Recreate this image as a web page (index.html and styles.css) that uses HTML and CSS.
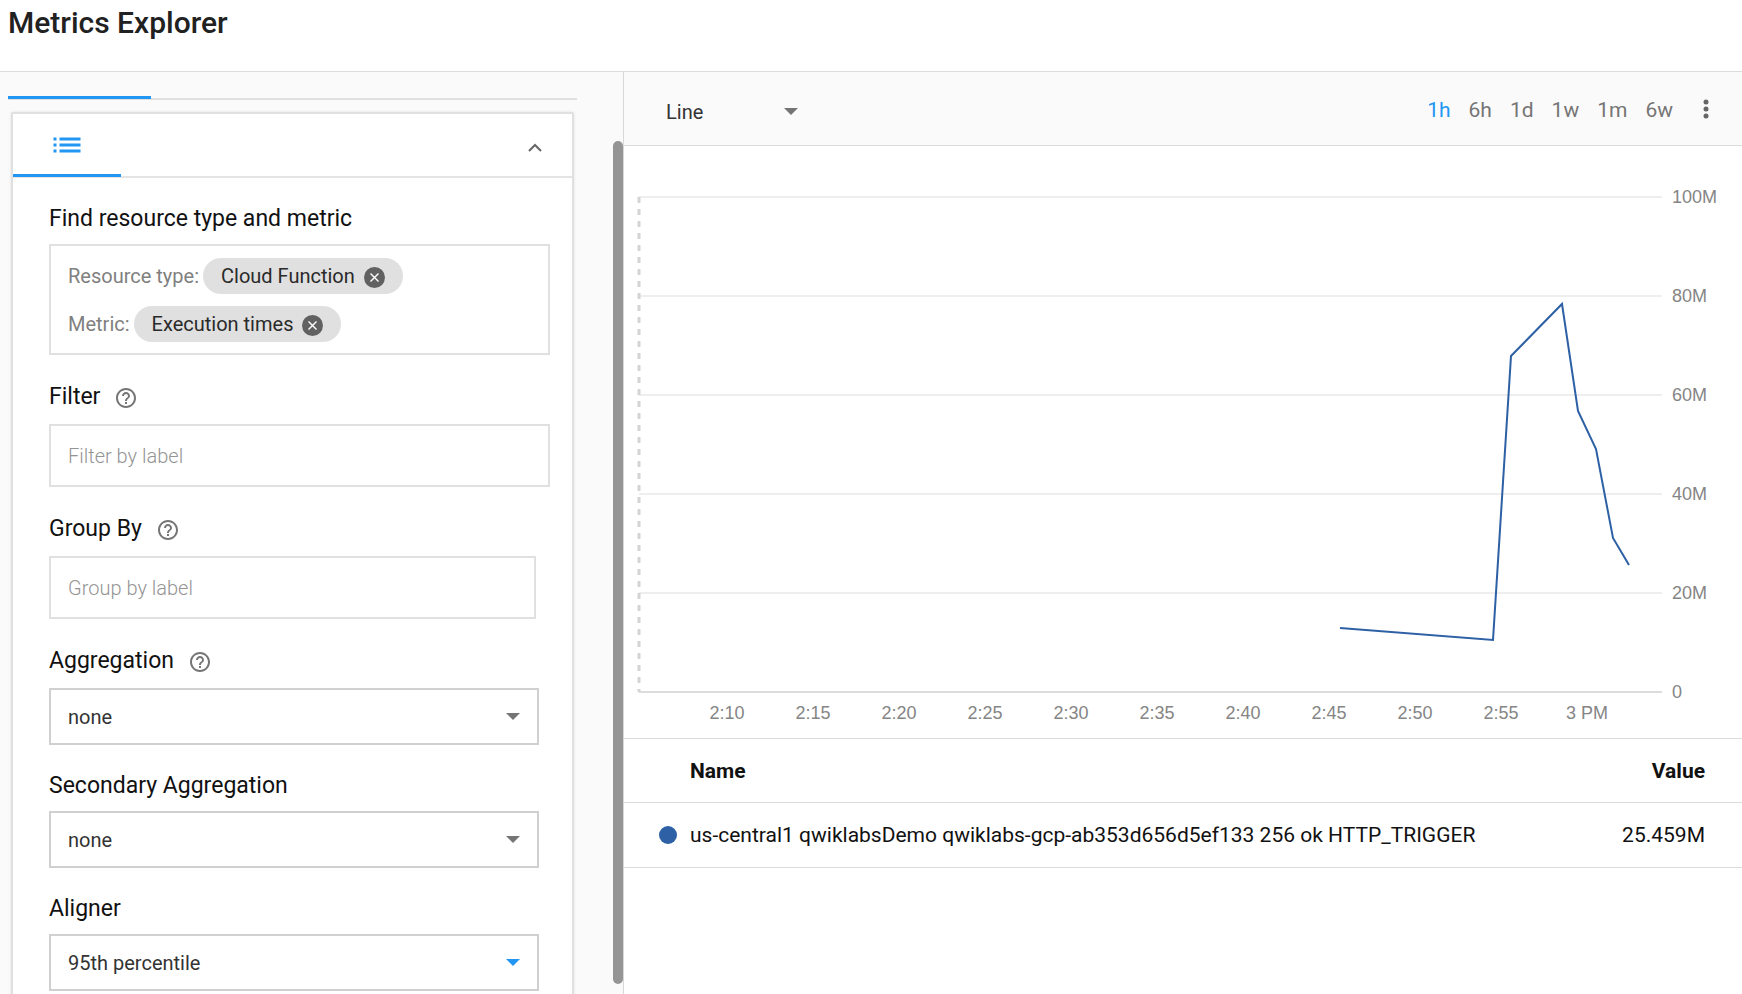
FILE: index.html
```html
<!DOCTYPE html>
<html lang="en">
<head>
    <meta charset="UTF-8">
    <meta name="viewport" content="width=device-width, initial-scale=1.0">
    <title>Metrics Explorer</title>
    <link rel="stylesheet" href="styles.css">
</head>
<body>
    <header class="page-header">
        <h1>Metrics Explorer</h1>
    </header>

    <main class="workspace">
        <section class="config-pane">
            <div class="tab-strip"><div class="tab-ink"></div></div>

            <form class="card">
                <div class="card-header">
                    <button type="button" class="card-tab" aria-label="Metric">
                        <svg width="28" height="16" viewBox="0 0 28 16" fill="#2196f3">
                            <path d="M.5.5h3v3h-3zM6.500.5h21v3h-21zM.5 6.500h3v3h-3zM6.500 6.500h21v3h-21zM.5 12.500h3v3h-3zM6.500 12.500h21v3h-21z"/>
                        </svg>
                    </button>
                    <button type="button" class="collapse" aria-label="Collapse">
                        <svg width="14" height="9" viewBox="0 0 14 9" fill="none" stroke="#666" stroke-width="2">
                            <path d="M1 8l6-6 6 6"/>
                        </svg>
                    </button>
                </div>

                <div class="card-body">
                    <h2 class="field-label">Find resource type and metric</h2>
                    <div class="metric-box">
                        <div class="chip-row">
                            <span>Resource type:</span>
                            <span class="chip">Cloud Function
                                <button type="button" class="chip-remove" aria-label="Remove Cloud Function">
                                    <svg width="21" height="21" viewBox="0 0 21 21">
                                        <circle cx="10.5" cy="10.5" r="10.5" fill="#616161"/>
                                        <path d="M6.5 6.5l8 8M14.5 6.5l-8 8" stroke="#fff" stroke-width="1.4"/>
                                    </svg>
                                </button>
                            </span>
                        </div>
                        <div class="chip-row">
                            <span>Metric:</span>
                            <span class="chip">Execution times
                                <button type="button" class="chip-remove" aria-label="Remove Execution times">
                                    <svg width="21" height="21" viewBox="0 0 21 21">
                                        <circle cx="10.5" cy="10.5" r="10.5" fill="#616161"/>
                                        <path d="M6.5 6.5l8 8M14.5 6.5l-8 8" stroke="#fff" stroke-width="1.4"/>
                                    </svg>
                                </button>
                            </span>
                        </div>
                    </div>

                    <div class="field-label with-help">
                        <label for="filter">Filter</label>
                        <button type="button" class="help" aria-label="Filter help">
                            <svg width="24" height="24" viewBox="0 0 24 24" fill="#757575">
                                <path d="M11 18h2v-2h-2v2zm1-16C6.48 2 2 6.48 2 12s4.48 10 10 10 10-4.48 10-10S17.52 2 12 2zm0 18c-4.41 0-8-3.59-8-8s3.59-8 8-8 8 3.59 8 8-3.59 8-8 8zm0-14c-2.21 0-4 1.79-4 4h2c0-1.1.9-2 2-2s2 .9 2 2c0 2-3 1.75-3 5h2c0-2.25 3-2.5 3-5 0-2.21-1.79-4-4-4z"/>
                            </svg>
                        </button>
                    </div>
                    <input class="text-field" type="text" id="filter" placeholder="Filter by label">

                    <div class="field-label with-help">
                        <label for="groupBy">Group By</label>
                        <button type="button" class="help" aria-label="Group By help">
                            <svg width="24" height="24" viewBox="0 0 24 24" fill="#757575">
                                <path d="M11 18h2v-2h-2v2zm1-16C6.48 2 2 6.48 2 12s4.48 10 10 10 10-4.48 10-10S17.52 2 12 2zm0 18c-4.41 0-8-3.59-8-8s3.59-8 8-8 8 3.59 8 8-3.59 8-8 8zm0-14c-2.21 0-4 1.79-4 4h2c0-1.1.9-2 2-2s2 .9 2 2c0 2-3 1.75-3 5h2c0-2.25 3-2.5 3-5 0-2.21-1.79-4-4-4z"/>
                            </svg>
                        </button>
                    </div>
                    <div class="group-wrap">
                        <input class="text-field" type="text" id="groupBy" placeholder="Group by label">
                    </div>

                    <div class="field-label with-help">
                        <label for="aggregation">Aggregation</label>
                        <button type="button" class="help" aria-label="Aggregation help">
                            <svg width="24" height="24" viewBox="0 0 24 24" fill="#757575">
                                <path d="M11 18h2v-2h-2v2zm1-16C6.48 2 2 6.48 2 12s4.48 10 10 10 10-4.48 10-10S17.52 2 12 2zm0 18c-4.41 0-8-3.59-8-8s3.59-8 8-8 8 3.59 8 8-3.59 8-8 8zm0-14c-2.21 0-4 1.79-4 4h2c0-1.1.9-2 2-2s2 .9 2 2c0 2-3 1.75-3 5h2c0-2.25 3-2.5 3-5 0-2.21-1.79-4-4-4z"/>
                            </svg>
                        </button>
                    </div>
                    <div class="select-wrap">
                        <select id="aggregation">
                            <option>none</option>
                        </select>
                    </div>

                    <label class="field-label" for="secondary">Secondary Aggregation</label>
                    <div class="select-wrap">
                        <select id="secondary">
                            <option>none</option>
                        </select>
                    </div>

                    <label class="field-label" for="aligner">Aligner</label>
                    <div class="select-wrap active">
                        <select id="aligner">
                            <option>95th percentile</option>
                        </select>
                    </div>
                </div>
            </form>
            <div class="scroll-thumb"></div>
        </section>

        <section class="chart-pane">
            <div class="toolbar">
                <div class="chart-type">
                    <select aria-label="Chart type">
                        <option>Line</option>
                    </select>
                </div>
                <div class="ranges">
                    <button type="button" class="selected">1h</button>
                    <button type="button">6h</button>
                    <button type="button">1d</button>
                    <button type="button">1w</button>
                    <button type="button">1m</button>
                    <button type="button">6w</button>
                </div>
                <button type="button" class="more" aria-label="More options">
                    <svg width="6" height="20" viewBox="0 0 6 20" fill="#666">
                        <circle cx="3" cy="3" r="2.5"/>
                        <circle cx="3" cy="10" r="2.5"/>
                        <circle cx="3" cy="17" r="2.5"/>
                    </svg>
                </button>
            </div>

            <svg class="chart" viewBox="0 0 1118 592" role="img" aria-label="Execution times">
                <g class="grid">
                    <path d="M15 51H1038M15 150H1038M15 249H1038M15 348H1038M15 447H1038"/>
                </g>
                <path class="axis" d="M15 546H1038"/>
                <path class="start" d="M15 51v495"/>
                <g class="ticks">
                    <text x="1048" y="57">100M</text>
                    <text x="1048" y="156">80M</text>
                    <text x="1048" y="255">60M</text>
                    <text x="1048" y="354">40M</text>
                    <text x="1048" y="453">20M</text>
                    <text x="1048" y="552">0</text>
                </g>
                <g class="ticks times">
                    <text x="103" y="573">2:10</text>
                    <text x="189" y="573">2:15</text>
                    <text x="275" y="573">2:20</text>
                    <text x="361" y="573">2:25</text>
                    <text x="447" y="573">2:30</text>
                    <text x="533" y="573">2:35</text>
                    <text x="619" y="573">2:40</text>
                    <text x="705" y="573">2:45</text>
                    <text x="791" y="573">2:50</text>
                    <text x="877" y="573">2:55</text>
                    <text x="963" y="573">3 PM</text>
                </g>
                <polyline class="series" points="716,482 869,494 887,210 938,158 954,265 972,303 989,392 1005,419"/>
            </svg>

            <table class="legend">
                <thead>
                    <tr>
                        <th>Name</th>
                        <th>Value</th>
                    </tr>
                </thead>
                <tbody>
                    <tr>
                        <td><span class="dot"></span>us-central1 qwiklabsDemo qwiklabs-gcp-ab353d656d5ef133 256 ok HTTP_TRIGGER</td>
                        <td>25.459M</td>
                    </tr>
                </tbody>
            </table>
        </section>
    </main>
</body>
</html>
```
FILE: styles.css
```css
* {
    box-sizing: border-box;
}
body {
    margin: 0;
    height: 100vh;
    display: flex;
    flex-direction: column;
    overflow: hidden;
    font-family: Roboto, sans-serif;
    font-size: 20px;
    color: #212121;
    background: #fff;
}
button, input, select {
    font: inherit;
    color: inherit;
}
button {
    padding: 0;
    border: none;
    background: none;
    cursor: pointer;
}
svg {
    display: block;
}
.page-header {
    flex: none;
    height: 72px;
    padding: 6px 8px;
    border-bottom: 1px solid #dcdcdc;
}
h1 {
    margin: 0;
    font-size: 30px;
    line-height: 34px;
    font-weight: 500;
}
.workspace {
    flex: 1;
    min-height: 0;
    display: grid;
    grid-template-columns: 623px 1fr;
}

/* left pane */
.config-pane {
    position: relative;
    overflow: hidden;
    padding: 24px 46px 0 8px;
    background: #fafafa;
}
.tab-strip {
    height: 4px;
    border-bottom: 2px solid #e0e0e0;
}
.tab-ink {
    width: 143px;
    height: 3px;
    background: #2196f3;
}
.card {
    margin: 12px 3px 0;
    height: 1000px;
    border: 2px solid #e0e0e0;
    border-radius: 2px;
    background: #fff;
    box-shadow: 0 0 3px rgba(0, 0, 0, 0.1);
}
.card-header {
    display: flex;
    justify-content: space-between;
    height: 64px;
    border-bottom: 2px solid #e4e4e4;
}
.card-tab {
    width: 108px;
    height: 63px;
    display: flex;
    align-items: center;
    justify-content: center;
    padding-top: 2px;
    border-bottom: 3px solid #2196f3;
}
.collapse {
    padding: 4px 30px 0;
}
.card-body {
    padding: 0 22px 0 36px;
}
.field-label {
    display: block;
    margin: 0;
    padding: 27px 0 12px;
    font-size: 23px;
    line-height: 27px;
    font-weight: 400;
    color: #111;
}
.with-help {
    display: flex;
    align-items: center;
    gap: 14px;
    padding: 28px 0 14px;
}
.help {
    height: 24px;
    margin-top: 3px;
}
.metric-box {
    display: flex;
    flex-direction: column;
    gap: 12px;
    padding: 12px 17px;
    height: 111px;
    border: 2px solid #e0e0e0;
    color: #808080;
}
.chip-row {
    display: flex;
    align-items: center;
    gap: 4px;
}
.chip {
    display: flex;
    align-items: center;
    gap: 9px;
    height: 36px;
    padding: 0 18px;
    border-radius: 18px;
    background: #e0e0e0;
    color: #2a2a2a;
}
.chip-remove {
    margin-top: 2px;
}
.text-field {
    display: block;
    width: 100%;
    height: 63px;
    padding: 0 17px;
    border: 2px solid #e0e0e0;
    border-radius: 0;
    background: #fff;
}
.text-field::placeholder {
    color: #949494;
    font-weight: 300;
    opacity: 1;
}
.group-wrap {
    margin-right: 14px;
}
.select-wrap {
    position: relative;
    margin-right: 11px;
}
.select-wrap select {
    display: block;
    width: 100%;
    height: 57px;
    padding: 0 17px;
    border: 2px solid #d0d0d0;
    border-radius: 0;
    background: #fff;
    color: #333;
    appearance: none;
}
.select-wrap::after, .chart-type::after {
    content: "";
    position: absolute;
    top: 25px;
    right: 19px;
    border: 7px solid transparent;
    border-top-color: #757575;
    border-bottom: none;
    pointer-events: none;
}
.select-wrap.active::after {
    border-top-color: #2196f3;
}
.scroll-thumb {
    position: absolute;
    top: 69px;
    right: 0;
    bottom: 10px;
    width: 10px;
    border-radius: 5px;
    background: #959595;
}

/* right pane */
.chart-pane {
    min-width: 0;
    border-left: 1px solid #d8d8d8;
}
.toolbar {
    display: flex;
    align-items: center;
    height: 74px;
    padding: 0 33px 0 42px;
    border-bottom: 1px solid #dcdcdc;
    background: #fafafa;
}
.chart-type {
    position: relative;
    margin-top: 6px;
    margin-right: auto;
}
.chart-type select {
    width: 132px;
    height: 36px;
    padding: 0;
    border: none;
    background: none;
    color: #333;
    appearance: none;
}
.chart-type::after {
    top: 14px;
    right: 0;
}
.ranges {
    display: flex;
    gap: 18px;
    padding-top: 2px;
    font-size: 21px;
    color: #757575;
}
.ranges .selected {
    color: #2196f3;
}
.more {
    margin-left: 30px;
}
.chart {
    width: 100%;
    height: auto;
    fill: none;
}
.grid {
    stroke: #eee;
    stroke-width: 2;
}
.axis {
    stroke: #dcdcdc;
    stroke-width: 2;
}
.start {
    stroke: #d4d4d4;
    stroke-width: 3;
    stroke-dasharray: 6 6;
}
.ticks {
    fill: #858585;
    font-family: "Liberation Sans", Arial, sans-serif;
    font-size: 18px;
}
.times {
    text-anchor: middle;
}
.series {
    stroke: #2d60a5;
    stroke-width: 2;
}
.legend {
    width: 100%;
    border-collapse: collapse;
    border-top: 1px solid #dcdcdc;
    font-size: 21px;
    color: #111;
}
.legend th, .legend td {
    height: 65px;
    padding: 0 37px 0 66px;
    border-bottom: 1px solid #dcdcdc;
    text-align: left;
}
.legend th {
    height: 64px;
    font-weight: 700;
}
.legend th:last-child, .legend td:last-child {
    padding-left: 0;
    text-align: right;
}
.dot {
    display: inline-block;
    width: 18px;
    height: 18px;
    margin-left: -31px;
    margin-right: 13px;
    border-radius: 50%;
    background: #2d60a5;
    vertical-align: -2px;
}
```
